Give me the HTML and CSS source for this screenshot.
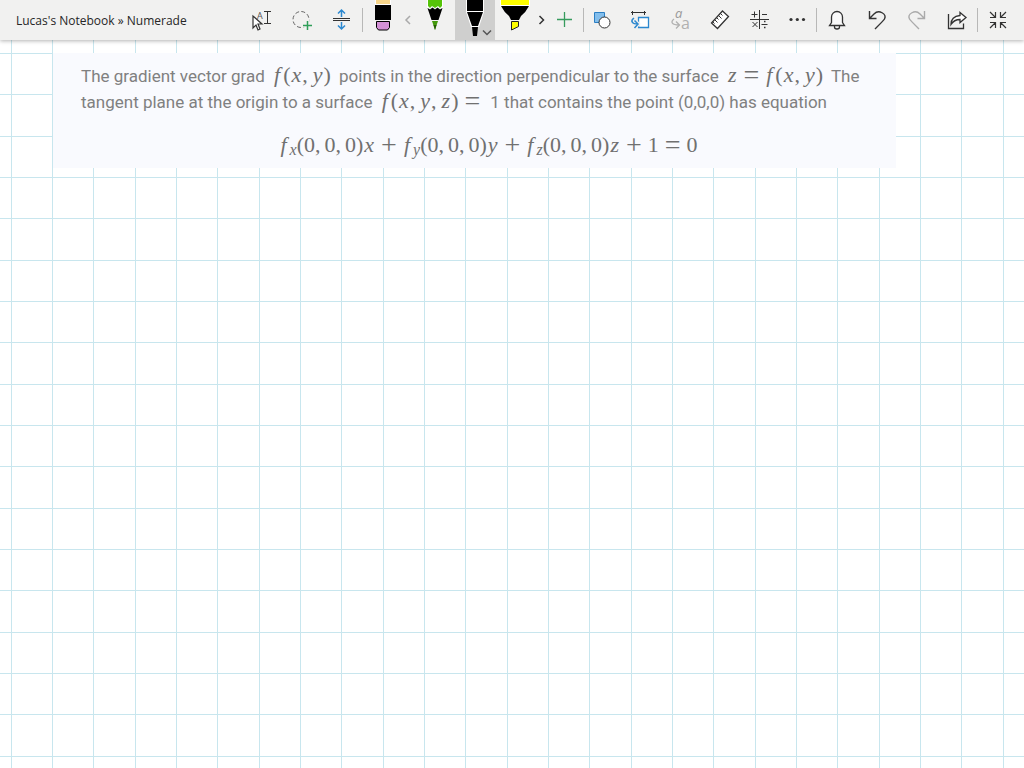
FILE: index.html
```html
<!DOCTYPE html>
<html lang="en">
<head>
    <meta charset="utf-8">
    <meta name="viewport" content="width=device-width">
    <title>Lucas's Notebook » Numerade</title>
    <link rel="stylesheet" href="styles.css">
</head>
<body>
    <header class="toolbar">
        <div class="title">Lucas's Notebook » Numerade</div>
        <button aria-label="Select objects or type text"><svg width="40" height="40">
            <path d="M11 16v12l3-3 2 5 2-1-2-5h4z" fill="#fff" stroke-width="1.200"/>
            <path d="M25.500 12v11M22 11.500h7M22 23.500h7"/>
            <text x="15" y="19" class="small">A</text>
        </svg></button>
        <button aria-label="Lasso select"><svg width="40" height="40">
            <circle cx="19" cy="19.500" r="8" stroke-dasharray="4 2.300" stroke="#666"/>
            <path d="M25.500 19v12M20 25.500h11" stroke="#f1f1f0" stroke-width="4"/>
            <path d="M25.500 21v9M21 25.500h9" stroke="#2f9e58" stroke-width="1.500"/>
        </svg></button>
        <button aria-label="Insert space"><svg width="40" height="40">
            <path d="M11 18.500h17M11 20.500h17"/>
            <path d="M19.500 17v-7M16 13.500l3.500-3.500 3.500 3.500M19.500 22v7M16 25.500l3.500 3.500 3.500-3.500" stroke="#2b88cf" stroke-width="1.500"/>
        </svg></button>
        <span class="sep"></span>
        <button aria-label="Eraser"><svg class="pen" width="40" height="40">
            <path d="M12 0h16v5h-16z" fill="#fff"/>
            <path d="M13 0h14v4h-14z" fill="#f8d68b"/>
            <path d="M12 5h16v15h-16z" fill="#000"/>
            <path d="M13.500 21.500h13v6l-2 2.500h-9l-2-2.500z" fill="#d391d6" stroke="#000"/>
        </svg></button>
        <button class="arrow" aria-label="Previous pens"><svg width="12" height="40">
            <path d="M7 16l-4 4 4 4" stroke="#aaa" stroke-width="1.500"/>
        </svg></button>
        <button aria-label="Green pencil"><svg class="pen" width="40" height="40">
            <path d="M12 0h16v8h-16z" fill="#fff"/>
            <path d="M13 0h14v6l-2 2-2-2-3 2-3-2-2 2-2-2z" fill="#55c308"/>
            <path d="M12.500 8l2.500 1.500 2.500-2 2.500 2 2.500-2 2.500 2 2.500-1.500-4 12h-7z" fill="#000"/>
            <path d="M17 21h6l-3 9z" fill="#439a0a"/>
            <path d="M18.500 25h3l-1.500 5z" fill="#245b05"/>
        </svg></button>
        <button class="active" aria-label="Black pen"><svg class="pen" width="40" height="40">
            <path d="M11 0h18v12l-5 15h-8l-5-15z" fill="#fff"/>
            <path d="M12 0h16v11h-16zM12 12h16l-5 14h-6zM17 27h6l-1 9h-4z" fill="#000"/>
            <path d="M28 30.500l4 4 4-4" stroke="#555" fill="none" stroke-width="1.500"/>
        </svg></button>
        <button aria-label="Yellow highlighter"><svg class="pen" width="40" height="40">
            <path d="M5 0h30v7h-30z" fill="#fff"/>
            <path d="M6 0h28v5h-28z" fill="#ff0"/>
            <path d="M6 6h28q-3 6-8 10l-2 4h-8l-2-4q-5-4-8-10z" fill="#000"/>
            <path d="M16.500 21.500h7v5l-7 3.500z" fill="#ff0" stroke="#222"/>
        </svg></button>
        <button class="arrow" aria-label="More pens"><svg width="12" height="40">
            <path d="M4.500 16l4 4-4 4" stroke-width="1.500"/>
        </svg></button>
        <button class="narrow" aria-label="Add pen"><svg width="36" height="40">
            <path d="M17.500 12v15M10 19.500h15" stroke="#379b5d" stroke-width="1.300"/>
        </svg></button>
        <span class="sep"></span>
        <button class="narrow" aria-label="Shapes"><svg width="36" height="40">
            <path d="M10.500 12.500h10v10h-10z" fill="#83beec" stroke="#2b7fc4"/>
            <circle cx="20.500" cy="22.500" r="5.500" fill="#fff"/>
        </svg></button>
        <button aria-label="Ink to shape"><svg width="40" height="40">
            <path d="M11 12.500h15M12.500 11v4M24.500 11v4"/>
            <path d="M18.500 17.500h10v10h-10z" fill="#fff" stroke="#2b88cf" stroke-width="1.300"/>
            <path d="M14 18c-4 3-2 6 4 6M14.500 20.500l3.500 3.500-3.500 4" stroke="#f1f1f0" stroke-width="4"/>
            <path d="M14 18c-4 3-2 6 4 6M14.500 20.500l3.500 3.500-3.500 4" stroke="#2b88cf" stroke-width="1.500"/>
        </svg></button>
        <button aria-label="Ink to text" disabled><svg width="40" height="40">
            <path d="M14 19c-4 3-2 6 5 6M16 21.500l3.500 3.500-3.500 3.500" stroke="#b1b1b0" stroke-width="1.300"/>
            <text x="15" y="18" class="script">a</text>
            <text x="21" y="29" class="letter">a</text>
        </svg></button>
        <button aria-label="Ruler"><svg width="40" height="40">
            <path d="M22.500 11l6 5.500-11 12-6-5.500z" fill="#fff" stroke-width="1.300"/>
            <path d="M20.500 13.500l2 2M18.500 15.500l3 3M16.500 17.500l2 2M14.500 19.500l3 3M12.500 21.500l2 2"/>
        </svg></button>
        <button aria-label="Math"><svg width="40" height="40">
            <path d="M19.500 10v19M10 19.500h19"/>
            <path d="M14.500 11.500v6M11.500 14.500h6M22 14.500h5M12.500 22l5 5M17.500 22l-5 5M21.500 24.500h6"/>
            <path d="M24 21.500h1.500M24 27.500h1.500" stroke-width="1.500"/>
        </svg></button>
        <button class="narrow" aria-label="More"><svg class="dots" width="36" height="40">
            <circle cx="11" cy="19.500" r="1.600"/><circle cx="17.300" cy="19.500" r="1.600"/><circle cx="23.500" cy="19.500" r="1.600"/>
        </svg></button>
        <span class="sep"></span>
        <button aria-label="Notifications"><svg width="40" height="40" stroke-width="1.300">
            <path d="M12.500 25.500l2-3v-5.500a5.500 5.500 0 0 1 11 0v5.500l2 3z" fill="#fafafa"/>
            <path d="M17.500 26v1a2.500 2 0 0 0 5 0v-1"/>
        </svg></button>
        <button aria-label="Undo"><svg width="40" height="40" stroke-width="1.400">
            <path d="M12.500 11v7.500h7M12.500 18.500l4.500-4.500c5-5 13 0 10.500 5-.5 1-1 1.500-9.500 10"/>
        </svg></button>
        <button aria-label="Redo" disabled><svg width="40" height="40" stroke-width="1.400">
            <path d="M27.500 11v7.500h-7M27.500 18.500l-4.500-4.500c-5-5-13 0-10.500 5 .5 1 1 1.500 9.500 10" stroke="#aaa"/>
        </svg></button>
        <button aria-label="Share"><svg width="40" height="40" stroke-width="1.300">
            <path d="M11.500 14v14.500h15v-5"/>
            <path d="M23 12.500l6 5-6 5v-3q-6 0-9 5 0-8 9-9z" fill="#fff"/>
        </svg></button>
        <span class="sep"></span>
        <button aria-label="Exit full screen"><svg width="40" height="40" stroke-width="1.200">
            <path d="M12 12l5.500 5.500M12 17.500h5.500v-5.500M28 12l-5.500 5.500M28 17.500h-5.500v-5.500M12 28l5.500-5.500M12 22.500h5.500v5.500M28 28l-5.500-5.500M28 22.500h-5.500v5.500"/>
        </svg></button>
    </header>
    <main class="page">
        <section class="note">
            <p>The gradient vector grad <span class="math"><var class="f">f</var>(<var>x</var><i>,</i><var>y</var>)</span> points in the direction perpendicular to the surface <span class="math"><var>z</var><b>=</b><var class="f">f</var>(<var>x</var><i>,</i><var>y</var>)</span> The<br>
            tangent plane at the origin to a surface <span class="math"><var class="f">f</var>(<var>x</var><i>,</i><var>y</var><i>,</i><var>z</var>)<b>=</b></span>1 that contains the point (0,0,0) has equation</p>
            <p class="equation"><span class="math"><var class="f">f</var><sub>x</sub>(0<i>,</i>0<i>,</i>0)<var>x</var><b>+</b><var class="f">f</var><sub>y</sub>(0<i>,</i>0<i>,</i>0)<var>y</var><b>+</b><var class="f">f</var><sub>z</sub>(0<i>,</i>0<i>,</i>0)<var>z</var><b>+</b>1<b>=</b>0</span></p>
        </section>
    </main>
</body>
</html>
```
FILE: styles.css
```css
body {
    margin: 0;
    min-height: 100vh;
    display: flex;
    flex-direction: column;
    background: #ffffff;
}
.toolbar {
    display: flex;
    align-items: center;
    height: 40px;
    padding-right: 6px;
    background: #f1f1f0;
    box-shadow: 0 1px 4px rgba(0, 0, 0, 0.3);
    z-index: 1;
}
.title {
    flex: 1;
    padding-left: 16px;
    font: 12px "Open Sans", sans-serif;
    color: #262626;
    white-space: nowrap;
}
.toolbar button {
    flex: none;
    width: 40px;
    height: 40px;
    padding: 0;
    border: 0;
    background: none;
}
.toolbar button.arrow {width: 12px}
.toolbar button.narrow {width: 36px}
.toolbar button.active {background: #cfcfce}
.sep {
    flex: none;
    width: 1px;
    height: 24px;
    background: #b8b8b7;
}
svg {display: block; fill: none; stroke: #333333}
svg.pen {stroke: none}
svg.dots {stroke: none; fill: #333333}
svg text {stroke: none; fill: #555555; font-family: "Open Sans", sans-serif}
svg .small {font-size: 9px}
svg .script {font-size: 13px; font-style: italic; fill: #999999}
svg .letter {font-size: 16px; fill: #b1b1b0}

/* squared paper: three cells to each 124px tile */
.page {
    flex: 1;
    background-image:
        linear-gradient(to right, #c8e6ee 1px, transparent 1px 41px, #c8e6ee 41px 42px, transparent 42px 82px, #c8e6ee 82px 83px, transparent 83px),
        linear-gradient(#c8e6ee 1px, transparent 1px 41px, #c8e6ee 41px 42px, transparent 42px 83px, #c8e6ee 83px 84px, transparent 84px);
    background-size: 124px 124px;
    background-position: 11px 13px;
}
.note {
    margin: 13px 128px 0 53px;
    padding: 10px 0 9px 28px;
    background: #f9fafe;
    color: #808080;
    font: 17px/26px Roboto, sans-serif;
}
.note p {margin: 0}
.math {
    margin: 0 4px;
    font-family: "Liberation Serif", serif;
    font-size: 22px;
    line-height: 22px;
    color: #707070;
    white-space: nowrap;
}
.math var {margin: 0 1px}
.math .f {margin-right: 3px}
.math i {font-style: normal; margin-right: 4px}
.math b {font-size: 28px; font-weight: normal; line-height: 0; vertical-align: -2px; margin: 0 6px}
.math sub {font-size: 16px; font-style: italic; line-height: 0; vertical-align: -3px}
.note .equation {margin-top: 18px; text-align: center}
```
